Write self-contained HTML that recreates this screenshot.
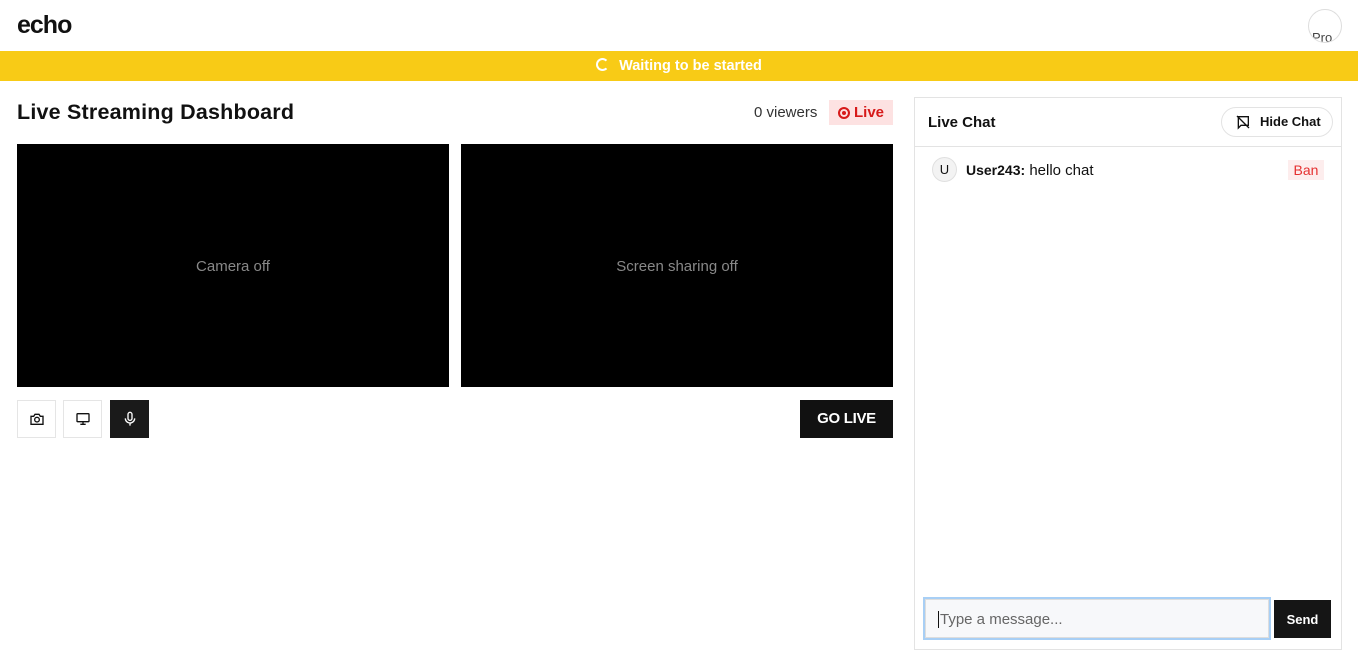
<!DOCTYPE html>
<html><head><meta charset="utf-8"><style>
*{box-sizing:border-box;margin:0;padding:0}
body{width:1358px;height:666px;overflow:hidden;background:#fff;font-family:"Liberation Sans",sans-serif;color:#111;position:relative}
.abs{position:absolute}
.logo{left:17px;top:11px;font-size:25px;font-weight:bold;letter-spacing:-1px}
.avatar{left:1308px;top:9px;width:34px;height:34px;border-radius:50%;border:1px solid #ddd;overflow:hidden;font-size:13px;color:#444}
.banner{left:0;top:51px;width:1358px;height:30px;background:#f8cb16;color:#fff;font-weight:bold;font-size:14.5px;text-align:center;line-height:31px}
.viewers{left:754px;top:104px;font-size:15px;color:#333}
.live{left:829px;top:100px;width:64px;height:25px;background:#fde2e2;color:#d71a1a;font-weight:bold;font-size:15px;line-height:26px;padding-left:25px}
.live:before{content:"";position:absolute;left:9px;top:7px;width:8px;height:8px;border:2px solid #d71a1a;border-radius:50%;box-shadow:inset 0 0 0 2px #fde2e2;background:#d71a1a}
.video{top:144px;width:432px;height:243px;background:#000;color:#888;font-size:15px;text-align:center;line-height:245px}
.btn{top:400px;width:39px;height:38px;border:1px solid #e5e5e5;display:flex;align-items:center;justify-content:center}
.golive{left:800px;top:400px;width:93px;height:38px;background:#111;color:#fff;font-weight:bold;font-size:15px;text-align:center;line-height:38px;letter-spacing:-0.3px}
.chat{left:914px;top:97px;width:428px;height:553px;border:1px solid #e3e3e3}
.chathead{height:49px;border-bottom:1px solid #e3e3e3}
</style></head><body>
<div class="abs logo">echo</div>
<div class="abs avatar"><div style="margin:20px 0 0 3px">Pro</div></div>
<div class="abs banner"><span style="display:inline-block;width:13px;height:13px;border:2px solid #fff;border-right-color:transparent;border-radius:50%;vertical-align:-1px;margin-right:10px"></span>Waiting to be started</div>
<div class="abs" style="left:17px;top:100px;font-size:21.5px;font-weight:bold;letter-spacing:0.2px">Live Streaming Dashboard</div>
<div class="abs viewers">0 viewers</div>
<div class="abs live">Live</div>
<div class="abs video" style="left:17px">Camera off</div>
<div class="abs video" style="left:461px">Screen sharing off</div>
<div class="abs btn" style="left:17px"><svg width="16" height="16" viewBox="0 0 24 24" fill="none" stroke="#111" stroke-width="2"><path d="M3 8h4l2-3h6l2 3h4v12H3z"/><circle cx="12" cy="13" r="3.5"/></svg></div>
<div class="abs btn" style="left:63px"><svg width="16" height="16" viewBox="0 0 24 24" fill="none" stroke="#111" stroke-width="2"><rect x="3" y="4" width="18" height="12" rx="1"/><path d="M12 16v4M8 20h8"/></svg></div>
<div class="abs btn" style="left:110px;background:#1a1a1a;border-color:#1a1a1a"><svg width="16" height="16" viewBox="0 0 24 24" fill="none" stroke="#fff" stroke-width="2"><rect x="9" y="2" width="6" height="12" rx="3"/><path d="M5 11a7 7 0 0 0 14 0M12 18v4"/></svg></div>
<div class="abs golive">GO LIVE</div>
<div class="abs chat">
 <div class="chathead">
  <div class="abs" style="left:13px;top:16px;font-weight:bold;font-size:15px">Live Chat</div>
  <div class="abs" style="left:306px;top:9px;width:112px;height:30px;border:1px solid #e3e3e3;border-radius:15px;font-size:13px;font-weight:bold;line-height:28px;padding-left:38px">Hide Chat
   <svg class="abs" style="left:13px;top:6px" width="16" height="16" viewBox="0 0 24 24" fill="none" stroke="#111" stroke-width="2"><path d="M5 4h15v13H9l-4 4zM3 3l18 18"/></svg></div>
 </div>
 <div class="abs" style="left:17px;top:59px;width:25px;height:25px;border-radius:50%;background:#f3f3f3;border:1px solid #e0e0e0;text-align:center;line-height:23px;font-size:13px">U</div>
 <div class="abs" style="left:51px;top:64px;font-size:15px"><b style="font-size:14px">User243:</b> hello chat</div>
 <div class="abs" style="left:373px;top:62px;width:36px;height:20px;background:#fdeded;color:#e53030;font-size:14px;text-align:center;line-height:20px">Ban</div>
 <div class="abs" style="left:8px;top:499px;width:348px;height:43px;border:2px solid #a8cff5;background:#f7f8fa;box-shadow:inset 0 0 0 1px #ddd;font-size:15px;color:#666;line-height:41px;padding-left:13px"><span style="border-left:1px solid #111;padding-left:1px">Type a message...</span></div>
 <div class="abs" style="left:359px;top:502px;width:57px;height:38px;background:#151515;color:#fff;font-weight:bold;font-size:13px;text-align:center;line-height:39px">Send</div>
</div>
</body></html>
